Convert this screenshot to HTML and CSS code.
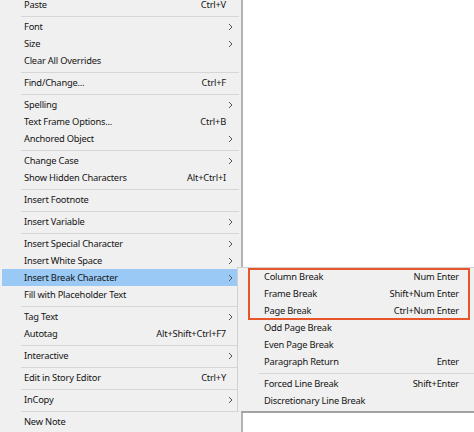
FILE: index.html
```html
<!DOCTYPE html>
<html>
<head>
<meta charset="utf-8">
<link rel="stylesheet" href="styles.css">
</head>
<body>
<div class="menu">
  <div class="item"><span class="label">Paste</span><span class="key">Ctrl+V</span><span class="arr"></span></div>
  <div class="sep"></div>
  <div class="item"><span class="label">Font</span><span class="key"></span><span class="arr"><svg width="5" height="8" viewBox="0 0 5 8"><path d="M1 1 L4 4 L1 7" fill="none" stroke="#555" stroke-width="1"/></svg></span></div>
  <div class="item"><span class="label">Size</span><span class="key"></span><span class="arr"><svg width="5" height="8" viewBox="0 0 5 8"><path d="M1 1 L4 4 L1 7" fill="none" stroke="#555" stroke-width="1"/></svg></span></div>
  <div class="item"><span class="label">Clear All Overrides</span><span class="key"></span><span class="arr"></span></div>
  <div class="sep"></div>
  <div class="item"><span class="label">Find/Change...</span><span class="key">Ctrl+F</span><span class="arr"></span></div>
  <div class="sep"></div>
  <div class="item"><span class="label">Spelling</span><span class="key"></span><span class="arr"><svg width="5" height="8" viewBox="0 0 5 8"><path d="M1 1 L4 4 L1 7" fill="none" stroke="#555" stroke-width="1"/></svg></span></div>
  <div class="item"><span class="label">Text Frame Options...</span><span class="key">Ctrl+B</span><span class="arr"></span></div>
  <div class="item"><span class="label">Anchored Object</span><span class="key"></span><span class="arr"><svg width="5" height="8" viewBox="0 0 5 8"><path d="M1 1 L4 4 L1 7" fill="none" stroke="#555" stroke-width="1"/></svg></span></div>
  <div class="sep"></div>
  <div class="item"><span class="label">Change Case</span><span class="key"></span><span class="arr"><svg width="5" height="8" viewBox="0 0 5 8"><path d="M1 1 L4 4 L1 7" fill="none" stroke="#555" stroke-width="1"/></svg></span></div>
  <div class="item"><span class="label">Show Hidden Characters</span><span class="key">Alt+Ctrl+I</span><span class="arr"></span></div>
  <div class="sep"></div>
  <div class="item"><span class="label">Insert Footnote</span><span class="key"></span><span class="arr"></span></div>
  <div class="sep"></div>
  <div class="item"><span class="label">Insert Variable</span><span class="key"></span><span class="arr"><svg width="5" height="8" viewBox="0 0 5 8"><path d="M1 1 L4 4 L1 7" fill="none" stroke="#555" stroke-width="1"/></svg></span></div>
  <div class="sep"></div>
  <div class="item"><span class="label">Insert Special Character</span><span class="key"></span><span class="arr"><svg width="5" height="8" viewBox="0 0 5 8"><path d="M1 1 L4 4 L1 7" fill="none" stroke="#555" stroke-width="1"/></svg></span></div>
  <div class="item"><span class="label">Insert White Space</span><span class="key"></span><span class="arr"><svg width="5" height="8" viewBox="0 0 5 8"><path d="M1 1 L4 4 L1 7" fill="none" stroke="#555" stroke-width="1"/></svg></span></div>
  <div class="item active"><span class="label">Insert Break Character</span><span class="key"></span><span class="arr"><svg width="5" height="8" viewBox="0 0 5 8"><path d="M1 1 L4 4 L1 7" fill="none" stroke="#555" stroke-width="1"/></svg></span></div>
  <div class="item"><span class="label">Fill with Placeholder Text</span><span class="key"></span><span class="arr"></span></div>
  <div class="sep"></div>
  <div class="item"><span class="label">Tag Text</span><span class="key"></span><span class="arr"><svg width="5" height="8" viewBox="0 0 5 8"><path d="M1 1 L4 4 L1 7" fill="none" stroke="#555" stroke-width="1"/></svg></span></div>
  <div class="item"><span class="label">Autotag</span><span class="key">Alt+Shift+Ctrl+F7</span><span class="arr"></span></div>
  <div class="sep"></div>
  <div class="item"><span class="label">Interactive</span><span class="key"></span><span class="arr"><svg width="5" height="8" viewBox="0 0 5 8"><path d="M1 1 L4 4 L1 7" fill="none" stroke="#555" stroke-width="1"/></svg></span></div>
  <div class="sep"></div>
  <div class="item"><span class="label">Edit in Story Editor</span><span class="key">Ctrl+Y</span><span class="arr"></span></div>
  <div class="sep"></div>
  <div class="item"><span class="label">InCopy</span><span class="key"></span><span class="arr"><svg width="5" height="8" viewBox="0 0 5 8"><path d="M1 1 L4 4 L1 7" fill="none" stroke="#555" stroke-width="1"/></svg></span></div>
  <div class="sep"></div>
  <div class="item"><span class="label">New Note</span><span class="key"></span><span class="arr"></span></div>
</div>

<div class="submenu">
  <div class="sitem"><span class="label">Column Break</span><span class="key">Num Enter</span></div>
  <div class="sitem"><span class="label">Frame Break</span><span class="key">Shift+Num Enter</span></div>
  <div class="sitem"><span class="label">Page Break</span><span class="key">Ctrl+Num Enter</span></div>
  <div class="sitem"><span class="label">Odd Page Break</span><span class="key"></span></div>
  <div class="sitem"><span class="label">Even Page Break</span><span class="key"></span></div>
  <div class="sitem"><span class="label">Paragraph Return</span><span class="key">Enter</span></div>
  <div class="ssep"></div>
  <div class="sitem"><span class="label">Forced Line Break</span><span class="key">Shift+Enter</span></div>
  <div class="sitem"><span class="label">Discretionary Line Break</span><span class="key"></span></div>
  <div class="callout"></div>
</div>
</body>
</html>
```

FILE: styles.css
```css
html, body {
  margin: 0;
  padding: 0;
  background: #ffffff;
  overflow: hidden;
  width: 474px;
  height: 432px;
}

body {
  position: relative;
  font-family: "Noto Sans", "Noto Sans CJK KR", sans-serif;
  font-size: 9.3px;
  letter-spacing: -0.2px;
  color: #141414;
}

.menu {
  width: 241px;
  margin-top: -4px;
  background: #f0f0f0;
  border-right: 2px solid #b3b3b3;
  padding-bottom: 20px;
}

.item {
  display: flex;
  align-items: center;
  height: 17px;
  line-height: 17px;
  margin-left: 2px;
  margin-right: 3px;
  padding-left: 22px;
}

.item.active {
  background: #99c9f4;
}

.label {
  flex: 1;
  white-space: nowrap;
}

.key {
  white-space: nowrap;
}

.arr {
  width: 10px;
  flex: none;
  display: flex;
  align-items: center;
  padding-left: 2px;
  height: 17px;
}

.arr svg {
  display: block;
}

.sep {
  height: 1px;
  background: #d6d6d6;
  margin: 3px 2px 1px 21px;
}

.submenu {
  position: absolute;
  left: 237px;
  top: 267px;
  width: 240px;
  background: #f0f0f0;
  border-top: 1px solid #d0d0d0;
  border-left: 1px solid #d0d0d0;
  padding-bottom: 2px;
  box-shadow: 4px 2px 0 #a3a3a3;
}

.sitem {
  display: flex;
  align-items: center;
  height: 17px;
  line-height: 17px;
  padding-left: 26px;
  padding-right: 19px;
}

.ssep {
  height: 1px;
  background: #d6d6d6;
  margin: 3px 0 1px 21px;
}

.callout {
  position: absolute;
  left: 10px;
  top: 0;
  width: 218px;
  height: 48px;
  border: 2px solid #e8552a;
}
```
